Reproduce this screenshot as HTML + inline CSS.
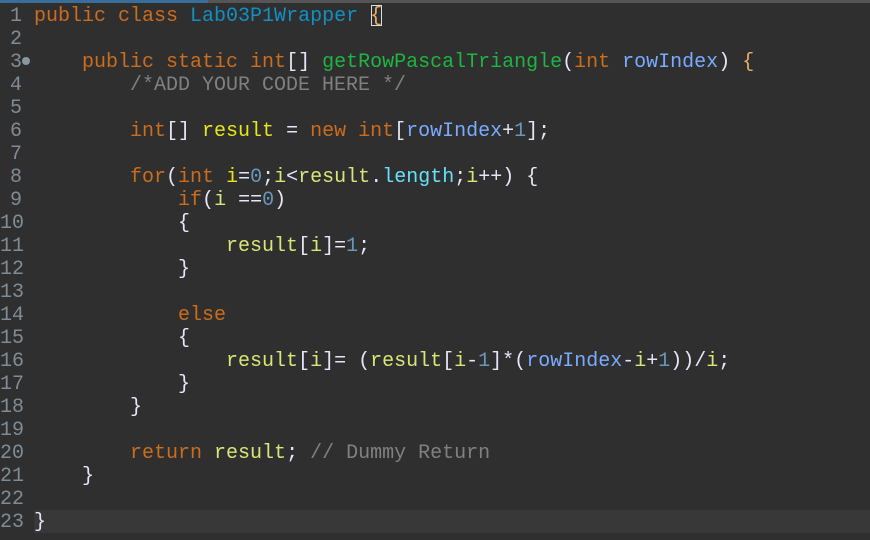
<!DOCTYPE html>
<html><head><style>
body{margin:0;width:870px;height:540px;background:#2f2f2f;overflow:hidden;position:relative}
.top{position:absolute;top:0;left:0;width:870px;height:3px;background:#555}
.top2{position:absolute;top:0;left:0;width:208px;height:3px;background:#3a6e99}
.hl{position:absolute;left:34px;top:510px;width:836px;height:23px;background:#383838}
pre{margin:0;position:absolute;top:5px;font-family:"Liberation Mono",monospace;font-size:20px;line-height:23px;color:#e6e6fa}
.ln{left:0;width:22px;text-align:right;color:#7f8c96}
.code{left:34px}
.k{color:#cc6c1d}.c{color:#1290c3}.m{color:#1eb540}.p{color:#79abff}.v{color:#e6e61a}.r{color:#d9e577}.n{color:#6897bb}.cm{color:#808080}.f{color:#66e1f8}.o{color:#f9faf4}.b{color:#e8b060}
.dot{position:absolute;left:22px;top:57px;width:8px;height:8px;border-radius:50%;background:#8a96a0}
.box{position:absolute;left:371px;top:5px;width:11px;height:21px;border:1px solid #ddd;box-sizing:border-box}
</style></head><body>
<div class="top"></div><div class="top2"></div><div class="hl"></div>
<pre class="ln">1
2
3
4
5
6
7
8
9
10
11
12
13
14
15
16
17
18
19
20
21
22
23</pre>
<div class="dot"></div><div class="box"></div>
<pre class="code"><span class="k">public class</span> <span class="c">Lab03P1Wrapper</span> <span class="b">{</span>

    <span class="k">public static int</span>[] <span class="m">getRowPascalTriangle</span>(<span class="k">int</span> <span class="p">rowIndex</span>) <span class="b">{</span>
        <span class="cm">/*ADD YOUR CODE HERE */</span>

        <span class="k">int</span>[] <span class="v">result</span> = <span class="k">new int</span>[<span class="p">rowIndex</span>+<span class="n">1</span>];

        <span class="k">for</span>(<span class="k">int</span> <span class="v">i</span>=<span class="n">0</span>;<span class="r">i</span>&lt;<span class="r">result</span>.<span class="f">length</span>;<span class="r">i</span>++) {
            <span class="k">if</span>(<span class="r">i</span> ==<span class="n">0</span>)
            {
                <span class="r">result</span>[<span class="r">i</span>]=<span class="n">1</span>;
            }

            <span class="k">else</span>
            {
                <span class="r">result</span>[<span class="r">i</span>]= (<span class="r">result</span>[<span class="r">i</span>-<span class="n">1</span>]*(<span class="p">rowIndex</span>-<span class="r">i</span>+<span class="n">1</span>))/<span class="r">i</span>;
            }
        }

        <span class="k">return</span> <span class="r">result</span>; <span class="cm">// Dummy Return</span>
    }

}</pre>
</body></html>
